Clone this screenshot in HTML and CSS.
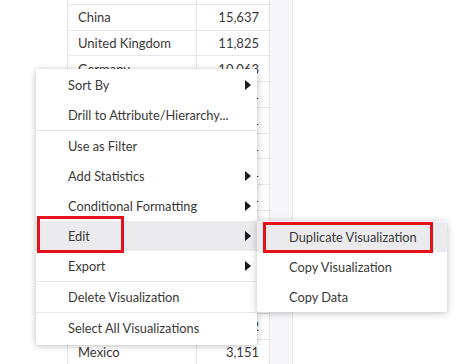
FILE: index.html
```html
<!DOCTYPE html>
<html lang="en">
<head>
    <meta charset="UTF-8">
    <meta name="viewport" content="width=device-width, initial-scale=1.0">
    <title>Visualization Menu</title>
    <link rel="stylesheet" href="styles.css">
</head>
<body>
    <div class="canvas">
        <div class="gutter"></div>

        <div class="table-container">
            <table>
                <tbody>
                    <tr><td>United States</td><td class="num">48,211</td></tr>
                    <tr><td>China</td><td class="num">15,637</td></tr>
                    <tr><td>United Kingdom</td><td class="num">11,825</td></tr>
                    <tr><td>Germany</td><td class="num">10,063</td></tr>
                    <tr><td>France</td><td class="num">9,411</td></tr>
                    <tr><td>Japan</td><td class="num">8,901</td></tr>
                    <tr><td>Canada</td><td class="num">7,221</td></tr>
                    <tr><td>Italy</td><td class="num">6,351</td></tr>
                    <tr><td>Australia</td><td class="num">5,941</td></tr>
                    <tr><td>Spain</td><td class="num">5,301</td></tr>
                    <tr><td>India</td><td class="num">4,711</td></tr>
                    <tr><td>Brazil</td><td class="num">4,121</td></tr>
                    <tr><td>Netherlands</td><td class="num">3,597</td></tr>
                    <tr><td>Korea</td><td class="num">3,382</td></tr>
                    <tr><td>Mexico</td><td class="num">3,151</td></tr>
                </tbody>
            </table>
        </div>

        <div class="side-strip"></div>
        <div class="blank"></div>
    </div>

    <!-- context menu -->
    <ul class="menu main-menu">
        <li class="item">Sort By<span class="arrow"></span></li>
        <li class="item">Drill to Attribute/Hierarchy...</li>
        <li class="divider"></li>
        <li class="item">Use as Filter</li>
        <li class="item">Add Statistics<span class="arrow"></span></li>
        <li class="item">Conditional Formatting<span class="arrow"></span></li>
        <li class="item active">Edit<span class="arrow"></span></li>
        <li class="item">Export<span class="arrow"></span></li>
        <li class="divider"></li>
        <li class="item">Delete Visualization</li>
        <li class="divider"></li>
        <li class="item">Select All Visualizations</li>
    </ul>

    <ul class="menu sub-menu">
        <li class="item active">Duplicate Visualization</li>
        <li class="item">Copy Visualization</li>
        <li class="item">Copy Data</li>
    </ul>

    <!-- red callout boxes -->
    <div class="callout callout-edit"></div>
    <div class="callout callout-dup"></div>
</body>
</html>
```

FILE: styles.css
```css
body {
    margin: 0;
    padding: 0;
    background-color: #ffffff;
    font-family: Lato, "Noto Sans", sans-serif;
    color: #3a3937;
    overflow: hidden;
}

.canvas {
    display: flex;
    height: 364px;
    overflow: hidden;
}

.gutter {
    width: 67px;
    flex-shrink: 0;
}

.table-container {
    width: 203px;
    flex-shrink: 0;
    margin-top: -22px;
}

table {
    width: 100%;
    border-collapse: collapse;
    font-size: 13px;
}

td {
    height: 25.75px;
    padding: 0 10px;
    border: 1px solid #e6e6e6;
    box-sizing: border-box;
    white-space: nowrap;
}

td.num {
    text-align: right;
    width: 73px;
}

.side-strip {
    width: 22px;
    flex-shrink: 0;
    background-color: #f7f7f9;
    border-right: 1px solid #ececee;
}

.blank {
    flex: 1;
}

.menu {
    position: absolute;
    margin: 0;
    list-style: none;
    background-color: #ffffff;
    box-shadow: 0 1px 7px rgba(0, 0, 0, 0.26);
    border-radius: 2px;
    font-size: 12.8px;
}

.main-menu {
    left: 36px;
    top: 69px;
    width: 221px;
    padding: 1px 0 2px;
}

.sub-menu {
    left: 257px;
    top: 221px;
    width: 190px;
    padding: 1px 0 0;
}

.item {
    position: relative;
    height: 30px;
    line-height: 30px;
    padding-left: 32px;
    white-space: nowrap;
}

.item.active {
    background-color: #ebebed;
}

.divider {
    height: 1px;
    background-color: #e8e8e8;
}

.arrow {
    position: absolute;
    right: 6px;
    top: 10px;
    width: 0;
    height: 0;
    border-top: 5px solid transparent;
    border-bottom: 5px solid transparent;
    border-left: 6px solid #1a1a1a;
}

.callout {
    position: absolute;
    border: 3px solid #e3121c;
    box-sizing: border-box;
}

.callout-edit {
    left: 37px;
    top: 216px;
    width: 87px;
    height: 37px;
}

.callout-dup {
    left: 263px;
    top: 222px;
    width: 170px;
    height: 31px;
}
```
